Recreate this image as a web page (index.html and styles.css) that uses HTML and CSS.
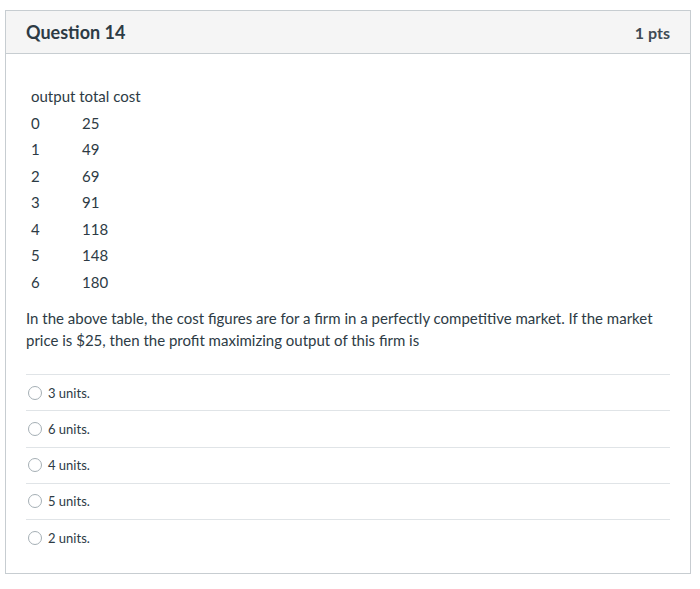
FILE: index.html
```html
<!DOCTYPE html>
<html>
<head>
<meta charset="utf-8">
<link rel="stylesheet" href="styles.css">
</head>
<body>
<div class="card">
  <div class="header">
    <span class="title">Question 14</span>
    <span class="pts">1 pts</span>
  </div>
  <div class="body">
    <table class="costs">
      <tr><td colspan="2" class="head">output total cost</td></tr>
      <tr><td class="q">0</td><td>25</td></tr>
      <tr><td class="q">1</td><td>49</td></tr>
      <tr><td class="q">2</td><td>69</td></tr>
      <tr><td class="q">3</td><td>91</td></tr>
      <tr><td class="q">4</td><td>118</td></tr>
      <tr><td class="q">5</td><td>148</td></tr>
      <tr><td class="q">6</td><td>180</td></tr>
    </table>
    <p class="question">In the above table, the cost figures are for a firm in a perfectly competitive market. If the market price is $25, then the profit maximizing output of this firm is</p>
    <div class="answers">
      <label class="answer"><span class="radio"></span>3 units.</label>
      <label class="answer"><span class="radio"></span>6 units.</label>
      <label class="answer"><span class="radio"></span>4 units.</label>
      <label class="answer"><span class="radio"></span>5 units.</label>
      <label class="answer"><span class="radio"></span>2 units.</label>
    </div>
  </div>
</div>
</body>
</html>
```
FILE: styles.css
```css
body {
  margin: 0;
  background: #fff;
  font-family: Lato, "Liberation Sans", sans-serif;
  color: #2d3b45;
}
.card {
  margin: 10px 0 0 5px;
  width: 684px;
  border: 1px solid #c7cdd1;
}
.header {
  height: 42px;
  background: #f5f5f5;
  border-bottom: 1px solid #c7cdd1;
  padding: 0 20px;
  display: flex;
  align-items: center;
  justify-content: space-between;
}
.title {
  font-size: 18px;
  font-weight: bold;
}
.pts {
  font-size: 16px;
  font-weight: bold;
  color: #404b54;
}
.body {
  padding: 29px 20px 18px;
}
.costs {
  border-collapse: collapse;
  font-size: 15px;
  margin-left: 1px;
}
.costs td {
  padding: 4px 4px 4.5px;
  line-height: 18px;
}
.costs td.q {
  width: 43px;
}
.question {
  font-size: 15px;
  line-height: 22px;
  margin: 12px 0 23px;
}
.answers {
  border-top: 1px solid #e0e4e7;
}
.answer {
  display: flex;
  align-items: center;
  height: 35.25px;
  border-bottom: 1px solid #e0e4e7;
  font-size: 13px;
  padding-left: 2px;
}
.answer:last-child {
  border-bottom: none;
}
.radio {
  width: 12px;
  height: 12px;
  border: 1px solid #a5afb5;
  border-radius: 50%;
  margin-right: 6px;
  box-sizing: content-box;
  background: #fff;
}
```
